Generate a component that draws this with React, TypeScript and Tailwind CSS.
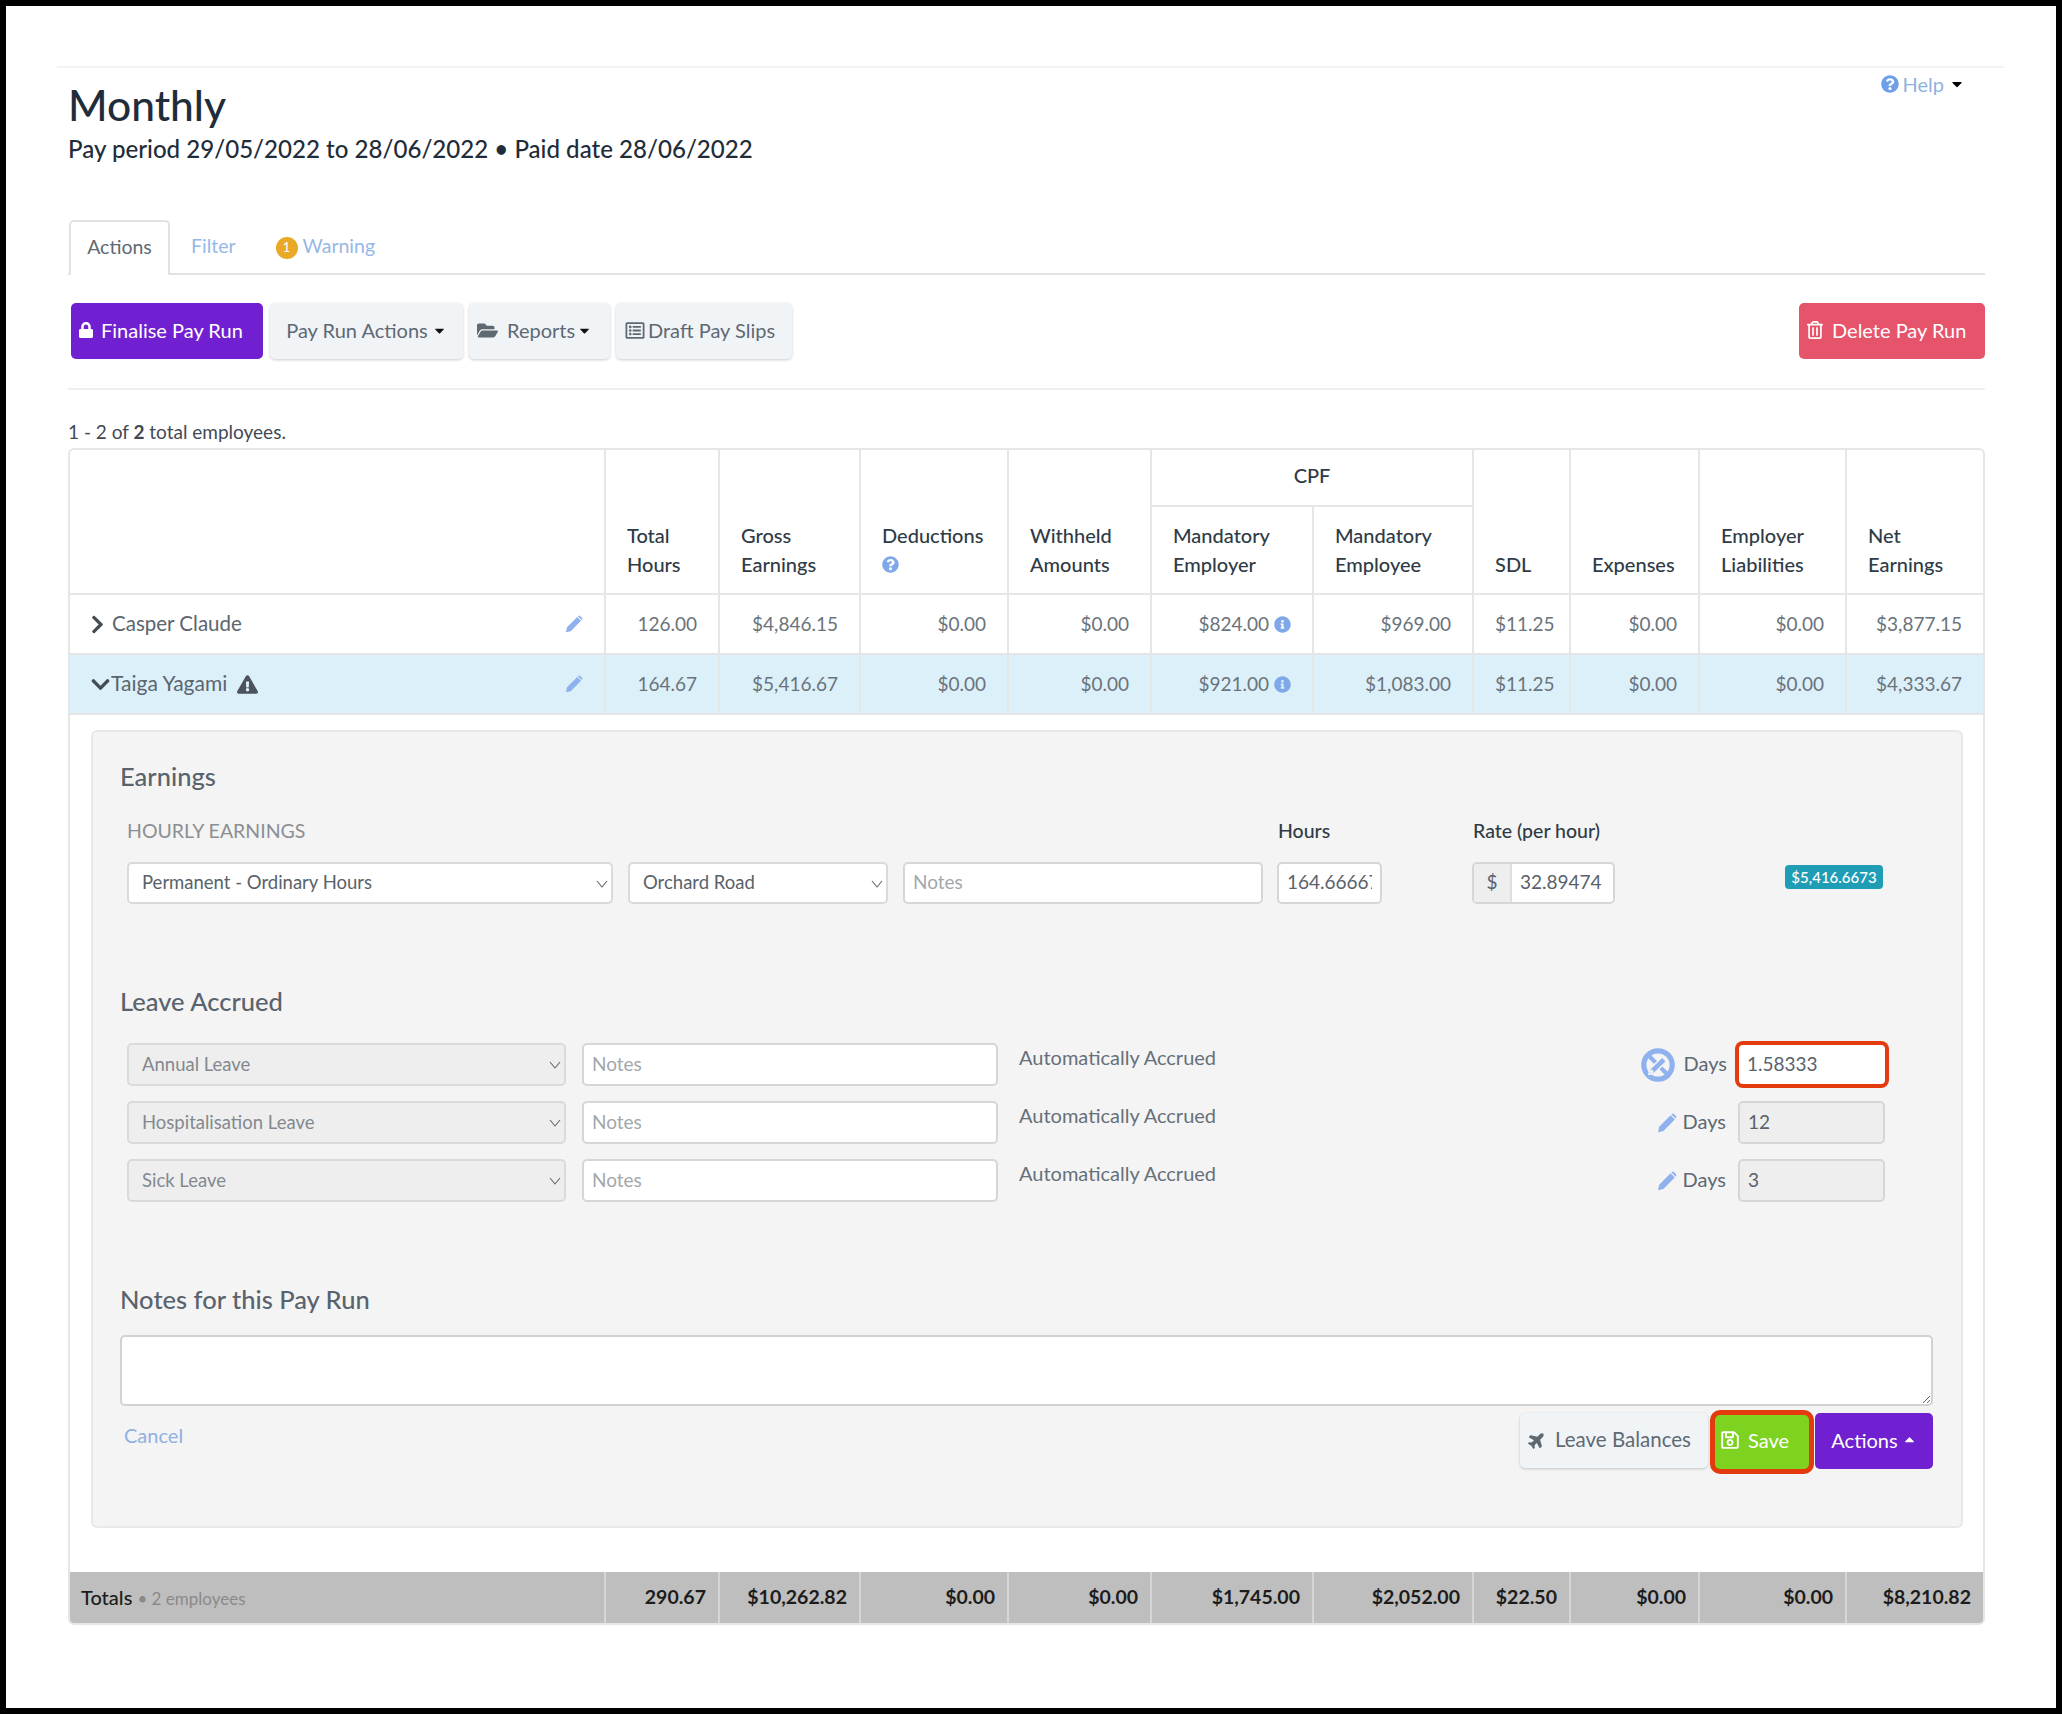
import React from 'react';
import {
  FaLock, FaFolderOpen, FaRegListAlt, FaRegTrashAlt, FaQuestionCircle, FaCaretDown, FaCaretUp,
  FaInfoCircle, FaChevronRight, FaChevronDown, FaExclamationTriangle, FaPlane, FaRegSave,
} from 'react-icons/fa';

const th = 'border-l-2 border-[#e6e6e6] pl-[21px] pr-[10px] align-bottom pb-[15px] text-left font-medium leading-[28.5px] text-[#2f3b46]';
const td = 'border-l-2 border-[#e6e6e6] pr-[21px] text-right text-[19px]';
const totalTd = 'border-l-2 border-[#d6d6d6] pb-[2px] pr-[12px] text-right text-[19.5px] font-bold text-[#1c1c1c]';

const rows = [
  { name: 'Casper Claude', open: false, cells: ['126.00', '$4,846.15', '$0.00', '$0.00', '$824.00', '$969.00', '$11.25', '$0.00', '$0.00', '$3,877.15'] },
  { name: 'Taiga Yagami', open: true, cells: ['164.67', '$5,416.67', '$0.00', '$0.00', '$921.00', '$1,083.00', '$11.25', '$0.00', '$0.00', '$4,333.67'] },
];

const totals = ['290.67', '$10,262.82', '$0.00', '$0.00', '$1,745.00', '$2,052.00', '$22.50', '$0.00', '$0.00', '$8,210.82'];

const Pencil = ({ className = '' }: { className?: string }) => (
  <svg viewBox="0 0 20 20" className={`fill-current ${className}`}>
    <path d="M1 19.3l1.2-5.6L13.6 2.2l4.2 4.2L6.4 18zM14.7 1.1a1.6 1.6 0 0 1 2.2 0l2 2a1.6 1.6 0 0 1 0 2.2l-.3.3-4.2-4.2z" />
  </svg>
);

const Select = ({ value, className = '', disabled = false }: { value: string; className?: string; disabled?: boolean }) => (
  <div className={`relative ${className}`}>
    <select
      defaultValue={value}
      disabled={disabled}
      className={`h-full w-full appearance-none rounded-[5px] border-2 border-[#dadada] pl-[13px] text-[18.5px] ${disabled ? 'bg-[#eeeeee] text-[#83898f]' : 'bg-white text-[#59626b]'}`}
    >
      <option>{value}</option>
    </select>
    <svg viewBox="0 0 12 8" className="pointer-events-none absolute right-[5px] top-[18px] h-[8px] w-[12px] fill-none stroke-[#666] stroke-[1.1]">
      <path d="M1 1l5 6 5-6" />
    </svg>
  </div>
);

const Notes = ({ className = '' }: { className?: string }) => (
  <input
    placeholder="Notes"
    className={`rounded-[5px] border-2 border-[#d6d6d6] bg-white pb-[3px] pl-[8px] text-[19px] text-[#59626b] placeholder:text-[#a2a7ac] ${className}`}
  />
);

const BanPencil = () => (
  <svg viewBox="0 0 34 34" className="mr-[3px] h-[34px] w-[34px] text-[#8fb1ee]">
    <circle cx="17" cy="17" r="14.2" fill="none" stroke="currentColor" strokeWidth="5.2" />
    <path d="M7.5 7.5l19 19" stroke="currentColor" strokeWidth="4" />
    <path d="M8 26.2l1.2-5.6L21.2 9l4.4 4.4L13.6 25z" fill="currentColor" stroke="#f4f4f4" strokeWidth="1.6" />
    <circle cx="10.8" cy="23.4" r="1.6" fill="#f4f4f4" />
  </svg>
);

const LeaveRow = ({ name, days, highlight }: { name: string; days: string; highlight?: boolean }) => (
  <div className="ml-[7px] mr-[50px] flex h-[43px] items-start">
    <Select value={name} disabled className="h-[43px] w-[439px]" />
    <Notes className="ml-[16px] h-[43px] w-[416px]" />
    <span className="ml-[21px] text-[20px] leading-[29px] text-[#66707a]">Automatically Accrued</span>
    <div className="ml-auto flex h-[43px] items-center">
      {highlight ? <BanPencil /> : <Pencil className="h-[20px] w-[20px] text-[#8fb1ee]" />}
      <span className="-mt-[4px] ml-[6px] mr-[12px] text-[20px] text-[#5e6973]">Days</span>
      {highlight ? (
        <input readOnly value={days} className="h-[39px] w-[146px] rounded-[4px] bg-white pb-[2px] pl-[8px] text-[19px] text-[#59626b] ring-4 ring-[#e33b0d]" />
      ) : (
        <input readOnly value={days} className="h-[43px] w-[147px] rounded-[5px] border-2 border-[#d6d6d6] bg-[#eeeeee] pb-[3px] pl-[8px] text-[19px] text-[#59626b]" />
      )}
    </div>
  </div>
);

export default function App() {
  return (
    <div className="h-[1714px] w-[2062px] overflow-hidden border-[6px] border-black bg-white font-['Lato',sans-serif] text-[20px] text-[#5e6973]">
      <div className="ml-[51px] mt-[60px] h-[2px] w-[1947px] bg-[#f3f3f3]" />
      <div className="ml-[62px] w-[1917px]">
        <div className="flex items-start justify-between">
          <div className="pt-[12px] text-[#1f2d3a]">
            <h1 className="text-[42.5px] font-medium leading-[50px]">Monthly</h1>
            <p className="mt-[3px] text-[24.1px] font-medium leading-[32px]">Pay period 29/05/2022 to 28/06/2022 • Paid date 28/06/2022</p>
          </div>
          <div className="mr-[20px] mt-[1px] flex items-center text-[20px] text-[#8fb1e0]">
            <FaQuestionCircle className="mr-[4px] h-[18px] w-[18px] text-[#6f9fe8]" />
            Help
            <FaCaretDown className="ml-[5px] h-[16px] w-[16px] text-black" />
          </div>
        </div>

        {/* tabs */}
        <div className="mt-[55px] flex h-[55px] items-stretch border-b-2 border-[#e2e2e2] text-[19.5px]">
          <div className="-mb-[2px] ml-[1px] flex w-[101px] items-center justify-center rounded-t-[5px] border-2 border-b-0 border-[#e2e2e2] bg-white pb-[4px] text-[#5e6973]">Actions</div>
          <div className="ml-[21px] flex items-center pb-[2px] text-[#96b8e6]">Filter</div>
          <div className="ml-[40px] flex items-center pb-[2px] text-[#96b8e6]">
            <span className="mr-[5px] mt-[5px] flex h-[22px] w-[22px] items-center justify-center rounded-full bg-[#e9a825] text-[13px] text-white">1</span>
            Warning
          </div>
        </div>

        {/* toolbar */}
        <div className="mt-[28px] flex h-[56px] items-stretch pl-[3px]">
          <button className="flex w-[192px] items-center rounded-[5px] bg-[#7020d0] pb-[2px] pl-[8px] text-white">
            <FaLock className="mr-[8px] h-[16px] w-[14px]" />
            Finalise Pay Run
          </button>
          <button className="ml-[7px] flex w-[193px] items-center justify-center rounded-[5px] bg-[#f1f4f7] pb-[2px] text-[#5e6973] shadow-[0_1px_3px_rgba(0,0,0,0.2)]">
            Pay Run Actions
            <FaCaretDown className="ml-[4px] h-[15px] w-[15px] text-[#111]" />
          </button>
          <button className="ml-[6px] flex w-[141px] items-center rounded-[5px] bg-[#f1f4f7] pb-[2px] pl-[8px] text-[#5e6973] shadow-[0_1px_3px_rgba(0,0,0,0.2)]">
            <FaFolderOpen className="mr-[9px] h-[19px] w-[21px]" />
            Reports
            <FaCaretDown className="ml-[2px] h-[15px] w-[15px] text-[#111]" />
          </button>
          <button className="ml-[6px] flex w-[176px] items-center rounded-[5px] bg-[#f1f4f7] pb-[2px] pl-[9px] text-[#5e6973] shadow-[0_1px_3px_rgba(0,0,0,0.2)]">
            <FaRegListAlt className="mr-[3px] h-[19px] w-[20px]" />
            Draft Pay Slips
          </button>
          <button className="ml-auto flex w-[186px] items-center rounded-[5px] bg-[#e5546a] pb-[2px] pl-[8px] text-white">
            <FaRegTrashAlt className="mr-[9px] h-[18px] w-[16px]" />
            Delete Pay Run
          </button>
        </div>

        <div className="mt-[29px] h-[2px] bg-[#efefef]" />
        <p className="mt-[30px] text-[19px] leading-[24px] text-[#3f4a54]">
          1 - 2 of <b>2</b> total employees.
        </p>

        {/* pay run table */}
        <div className="mt-[4px] overflow-hidden rounded-[6px] border-2 border-[#e6e6e6]">
          <table className="w-[1913px] table-fixed border-separate border-spacing-0">
            <colgroup>
              <col className="w-[534px]" />
              <col className="w-[114px]" />
              <col className="w-[141px]" />
              <col className="w-[148px]" />
              <col className="w-[143px]" />
              <col className="w-[162px]" />
              <col className="w-[160px]" />
              <col className="w-[97px]" />
              <col className="w-[129px]" />
              <col className="w-[147px]" />
              <col className="w-[138px]" />
            </colgroup>
            <thead>
              <tr className="h-[57px]">
                <th rowSpan={2} className="border-b-2 border-[#e6e6e6]" />
                <th rowSpan={2} className={`${th} border-b-2`}>Total<br />Hours</th>
                <th rowSpan={2} className={`${th} border-b-2`}>Gross<br />Earnings</th>
                <th rowSpan={2} className={`${th} border-b-2`}>
                  Deductions<br />
                  <FaQuestionCircle className="mb-[4px] inline h-[17px] w-[17px] text-[#7fa8ea]" />
                </th>
                <th rowSpan={2} className={`${th} border-b-2`}>Withheld<br />Amounts</th>
                <th colSpan={2} className="border-b-2 border-l-2 border-[#e6e6e6] pb-[6px] text-center font-medium text-[#2f3b46]">CPF</th>
                <th rowSpan={2} className={`${th} border-b-2`}>SDL</th>
                <th rowSpan={2} className={`${th} border-b-2`}>Expenses</th>
                <th rowSpan={2} className={`${th} border-b-2`}>Employer<br />Liabilities</th>
                <th rowSpan={2} className={`${th} border-b-2`}>Net<br />Earnings</th>
              </tr>
              <tr className="h-[88px]">
                <th className={`${th} border-b-2`}>Mandatory<br />Employer</th>
                <th className={`${th} border-b-2`}>Mandatory<br />Employee</th>
              </tr>
            </thead>
            <tbody>
              {rows.map((row) => (
                <tr key={row.name} className={`h-[60px] ${row.open ? 'bg-[#dcf0fa]' : 'bg-white'} text-[#6a737b]`}>
                  <td className="border-b-2 border-[#e6e6e6] pl-[21px] pr-[21px]">
                    <div className="flex items-center text-[#5b656e]">
                      {row.open ? (
                        <FaChevronDown className="h-[21px] w-[19px] text-[#444c54]" />
                      ) : (
                        <FaChevronRight className="mr-[8px] h-[21px] w-[13px] text-[#444c54]" />
                      )}
                      <span className={`pb-[2px] ${row.open ? 'ml-[1px] text-[21px]' : 'text-[20.5px]'}`}>{row.name}</span>
                      {row.open && <FaExclamationTriangle className="ml-[10px] h-[19px] w-[21px] text-[#4b545c]" />}
                      <Pencil className="ml-auto h-[18px] w-[18px] text-[#8fb1ee]" />
                    </div>
                  </td>
                  {row.cells.map((cell, i) => (
                    <td key={i} className={`${td} border-b-2 ${i === 6 ? '!text-left !pl-[21px]' : ''}`}>
                      {cell}
                      {i === 4 && <FaInfoCircle className="ml-[5px] inline h-[17px] w-[17px] align-[-2px] text-[#7fa8ea]" />}
                    </td>
                  ))}
                </tr>
              ))}
              <tr>
                <td colSpan={11} className="pb-[44px] pl-[21px] pr-[20px] pt-[15px]">
                  <div className="h-[798px] rounded-[6px] border-2 border-[#e8e8e8] bg-[#f4f4f4] pl-[27px] pr-[26px]">
                    <h3 className="mt-[28px] text-[25.5px] font-medium leading-[32px] text-[#59636d]">Earnings</h3>
                    <div className="ml-[7px] mt-[27px] flex h-[24px] items-center text-[19.5px]">
                      <span className="w-[1151px] text-[#8b8f93]">HOURLY EARNINGS</span>
                      <span className="w-[195px] font-medium text-[#2f3b46]">Hours</span>
                      <span className="font-medium text-[#2f3b46]">Rate (per hour)</span>
                    </div>
                    <div className="ml-[7px] mt-[19px] flex h-[42px] items-start">
                      <Select value="Permanent - Ordinary Hours" className="h-[42px] w-[486px]" />
                      <Select value="Orchard Road" className="ml-[15px] h-[42px] w-[260px]" />
                      <Notes className="ml-[15px] h-[42px] w-[360px]" />
                      <input readOnly value="164.66667" className="ml-[14px] h-[42px] w-[105px] rounded-[5px] border-2 border-[#d6d6d6] bg-white px-[8px] pb-[3px] text-[19px] text-[#59626b]" />
                      <div className="ml-[90px] flex h-[42px] w-[143px] overflow-hidden rounded-[5px] border-2 border-[#d6d6d6] bg-white text-[19px] text-[#59626b]">
                        <span className="flex w-[38px] items-center justify-center border-r-2 border-[#dedede] bg-[#eeeeee] pb-[2px]">$</span>
                        <span className="flex items-center pb-[2px] pl-[8px]">32.89474</span>
                      </div>
                      <span className="ml-[170px] mt-[3px] flex h-[24px] w-[98px] items-center justify-center rounded-[4px] bg-[#1f9db5] text-[15px] font-medium text-white">$5,416.6673</span>
                    </div>

                    <h3 className="mt-[81px] text-[25.5px] font-medium leading-[32px] text-[#59636d]">Leave Accrued</h3>
                    <div className="mt-[26px] flex flex-col gap-[15px]">
                      <LeaveRow name="Annual Leave" days="1.58333" highlight />
                      <LeaveRow name="Hospitalisation Leave" days="12" />
                      <LeaveRow name="Sick Leave" days="3" />
                    </div>

                    <h3 className="mt-[81px] text-[25.5px] font-medium leading-[32px] text-[#59636d]">Notes for this Pay Run</h3>
                    <textarea className="mt-[20px] block h-[71px] w-[1813px] resize-y rounded-[5px] border-2 border-[#d2d2d2] bg-white" />
                    <div className="mt-[7px] flex w-[1813px] items-start justify-between">
                      <span className="ml-[4px] mt-[10px] leading-[24px] text-[#8fb1e0]">Cancel</span>
                      <div className="flex h-[56px] items-start">
                        <button className="flex h-[55px] w-[188px] items-center rounded-[5px] bg-[#f1f4f7] pb-[2px] pl-[8px] text-[20.5px] text-[#5e6973] shadow-[0_1px_3px_rgba(0,0,0,0.2)]">
                          <FaPlane className="mr-[9px] h-[18px] w-[18px] -rotate-45" />
                          Leave Balances
                        </button>
                        <button className="ml-[7px] mt-[2px] flex h-[54px] w-[94px] items-center rounded-[5px] bg-[#7dd31f] pb-[4px] pl-[6px] text-white ring-[5px] ring-[#e33b0d]">
                          <FaRegSave className="mr-[9px] h-[20px] w-[18px]" />
                          Save
                        </button>
                        <button className="ml-[6px] flex h-[56px] w-[118px] items-center justify-center rounded-[5px] bg-[#7020d0] pb-[3px] text-white">
                          Actions
                          <FaCaretUp className="ml-[4px] h-[15px] w-[15px]" />
                        </button>
                      </div>
                    </div>
                  </div>
                </td>
              </tr>
              <tr className="h-[51px] bg-[#bebebe]">
                <td className="pb-[2px] pl-[11px] text-[20px] font-medium text-[#1c1c1c]">
                  Totals <span className="text-[17px] font-normal text-[#8a8a8a]">• 2 employees</span>
                </td>
                {totals.map((cell, i) => (
                  <td key={i} className={totalTd}>{cell}</td>
                ))}
              </tr>
            </tbody>
          </table>
        </div>
      </div>
    </div>
  );
}
